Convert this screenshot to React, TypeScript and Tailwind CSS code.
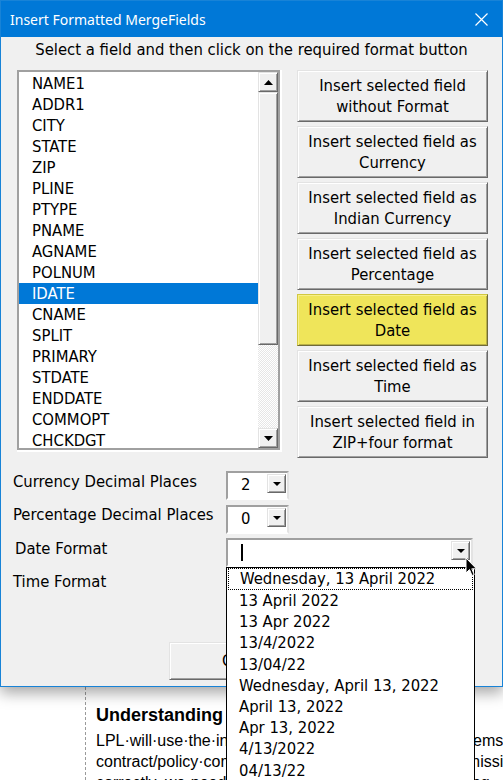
import React from "react";

// Insert Formatted MergeFields — UserForm style dialog over a Word document.

const FIELDS = [
  "NAME1",
  "ADDR1",
  "CITY",
  "STATE",
  "ZIP",
  "PLINE",
  "PTYPE",
  "PNAME",
  "AGNAME",
  "POLNUM",
  "IDATE",
  "CNAME",
  "SPLIT",
  "PRIMARY",
  "STDATE",
  "ENDDATE",
  "COMMOPT",
  "CHCKDGT"
];

const BUTTONS: [string, string][] = [
  ["Insert selected field", "without Format"],
  ["Insert selected field as", "Currency"],
  ["Insert selected field as", "Indian Currency"],
  ["Insert selected field as", "Percentage"],
  ["Insert selected field as", "Date"],
  ["Insert selected field as", "Time"],
  ["Insert selected field in", "ZIP+four format"]
];

const DATE_FORMATS = [
  "Wednesday, 13 April 2022",
  "13 April 2022",
  "13 Apr 2022",
  "13/4/2022",
  "13/04/22",
  "Wednesday, April 13, 2022",
  "April 13, 2022",
  "Apr 13, 2022",
  "4/13/2022",
  "04/13/22",
  "13-Apr-22"
];

const FORM_FONT =
  "font-['DejaVu_Sans_Condensed','DejaVu_Sans',sans-serif] font-stretch-condensed";

// raised 3D look (ButtonFace style)
const RAISED =
  "border-t border-l border-t-[#e3e3e3] border-l-[#e3e3e3] border-r border-b border-r-[#696969] border-b-[#696969] shadow-[inset_1px_1px_#ffffff,inset_-1px_-1px_#a0a0a0]";

function Tri({ up = false, w = 9, h = 5 }: { up?: boolean; w?: number; h?: number }) {
  return (
    <svg width={w} height={h} viewBox={`0 0 ${w} ${h}`}>
      {up ? (
        <path d={`M0 ${h} L${w / 2} 0 L${w} ${h} Z`} fill="#000" />
      ) : (
        <path d={`M0 0 L${w} 0 L${w / 2} ${h} Z`} fill="#000" />
      )}
    </svg>
  );
}

function Combo({ value, width }: { value?: string; width: string }) {
  return (
    <div
      className={`${width} h-[29px] flex border-t-2 border-l-2 border-t-[#a0a0a0] border-l-[#a0a0a0] border-r-2 border-b-2 border-r-[#e3e3e3] border-b-[#ffffff] bg-white`}
    >
      <div className="flex-1 flex items-center pl-[13px] text-[16.5px] leading-none text-black">
        {value !== undefined ? (
          value
        ) : (
          <span className="block w-[2px] h-[17px] bg-black" />
        )}
      </div>
      <div
        className={`w-[19px] h-[19px] mt-[1px] mr-[1px] flex items-center justify-center bg-[#f0f0f0] ${RAISED}`}
      >
        <Tri w={8} h={4} />
      </div>
    </div>
  );
}

function ListBox() {
  return (
    <div className="w-[265px] h-[382px] border-r-2 border-b-2 border-r-white border-b-white">
      <div className="h-full border-2 border-[#a0a0a0] flex">
        <div className="flex-1 bg-white pt-[1px] overflow-hidden">
          {FIELDS.map((f) => (
            <div
              key={f}
              className={`h-[21px] leading-[21px] pl-[13px] text-[16.5px] ${
                f === "IDATE" ? "bg-[#0078d7] text-white" : "text-black"
              }`}
            >
              {f}
            </div>
          ))}
        </div>
        <div className="w-[20px] flex flex-col bg-[#f0f0f0]">
          <div className={`h-[20px] flex items-center justify-center bg-[#f0f0f0] ${RAISED}`}>
            <Tri up />
          </div>
          <div className={`h-[253px] bg-[#f0f0f0] ${RAISED}`} />
          <div className="flex-1 bg-[repeating-conic-gradient(#ffffff_0_25%,#e6e6e6_0_50%)] bg-[length:2px_2px]" />
          <div className={`h-[20px] flex items-center justify-center bg-[#f0f0f0] ${RAISED}`}>
            <Tri />
          </div>
        </div>
      </div>
    </div>
  );
}

function FormatButton({ lines, active }: { lines: [string, string]; active?: boolean }) {
  return (
    <div
      className={`h-[52px] flex flex-col items-center justify-center text-[16.5px] leading-[21px] text-black ${
        active
          ? "bg-[#efe55a] border-t border-l border-t-[#d2c840] border-l-[#d2c840] border-r border-b border-r-[#6f6a3a] border-b-[#6f6a3a] shadow-[inset_1px_1px_#f6ef8a,inset_-1px_-1px_#b9b046]"
          : `bg-[#f0f0f0] ${RAISED}`
      }`}
    >
      <span>{lines[0]}</span>
      <span>{lines[1]}</span>
    </div>
  );
}

function Cursor() {
  return (
    <svg
      width="13"
      height="20"
      viewBox="0 0 13 20"
      className="absolute left-[465px] top-[557px] z-30"
    >
      <path
        d="M1 1 L1 16 L4.5 12.5 L7 18.5 L9.2 17.6 L6.8 11.8 L11.5 11.8 Z"
        fill="#000"
        stroke="#fff"
        strokeWidth="1"
      />
    </svg>
  );
}

export default function App() {
  return (
    <div className="relative w-[503px] h-[780px] overflow-hidden bg-white">
      {/* dialog window */}
      <div className="relative z-10 h-[687px] flex flex-col border border-[#1883d7] bg-[#f0f0f0] shadow-[0_6px_14px_rgba(0,0,0,0.35)]">
        <div className="h-[36px] shrink-0 bg-[#0078d7] flex items-center justify-between pl-[9px] pr-[14px] text-white">
          <span className="font-['Noto_Sans',sans-serif] text-[14px]">
            Insert Formatted MergeFields
          </span>
          <svg width="13" height="13" viewBox="0 0 13 13">
            <path d="M0.5 0.5 L12.5 12.5 M12.5 0.5 L0.5 12.5" stroke="#fff" strokeWidth="1.2" />
          </svg>
        </div>

        <div className={`flex-1 flex flex-col ${FORM_FONT} text-black`}>
          <div className="mt-[2px] h-[22px] leading-[22px] text-center text-[16.5px]">
            Select a field and then click on the required format button
          </div>

          <div className="mt-[9px] flex items-start pl-[16px]">
            <ListBox />
            <div className="ml-[15px] w-[191px] flex flex-col gap-[4px]">
              {BUTTONS.map((b, i) => (
                <FormatButton key={i} lines={b} active={i === 4} />
              ))}
            </div>
          </div>

          {/* options */}
          <div className="mt-[13px] pl-[12px] flex flex-col text-[16.5px]">
            <div className="flex h-[28px]">
              <div className="w-[213px] pt-[1px] leading-[20px]">Currency Decimal Places</div>
              <Combo value="2" width="w-[63px]" />
            </div>
            <div className="flex h-[28px] mt-[6px]">
              <div className="w-[213px] leading-[20px]">Percentage Decimal Places</div>
              <Combo value="0" width="w-[63px]" />
            </div>
            <div className="flex h-[29px] mt-[5px]">
              <div className="w-[213px] pl-[2px] pt-[1px] leading-[20px]">Date Format</div>
              <Combo width="w-[247px]" />
            </div>
            <div className="h-[20px] mt-[5px] leading-[20px]">Time Format</div>
          </div>

          <div className="mt-[50px] pl-[168px]">
            <div className={`w-[163px] h-[38px] flex items-center pl-[52px] bg-[#f0f0f0] text-[16.5px] ${RAISED}`}>
              Cancel
            </div>
          </div>
        </div>
      </div>

      {/* Word document behind the dialog */}
      <div className="h-[93px] pl-[85px] font-['Liberation_Sans',Arial,sans-serif] text-black">
        <div className="h-full border-l border-dashed border-[#9a9a9a] pl-[10px] pt-[17px] whitespace-nowrap">
          <div className="text-[18px] font-bold leading-[22px]">Understanding Your Statement</div>
          <div className="mt-[4px] text-[16px] leading-[21px]">
            LPL·will·use·the·information·you·send·to·update·systems·and
          </div>
          <div className="text-[16px] leading-[21px]">
            contract/policy·compensation·plan·is·applied·to·commission·data
          </div>
          <div className="text-[16px] leading-[21px]">
            correctly,·we·need·the·details·below·so·that·processing
          </div>
        </div>
      </div>

      {/* open date format list */}
      <div className={`absolute left-[226px] top-[567px] z-20 w-[249px] h-[230px] border border-black bg-white ${FORM_FONT} text-[16.5px] text-black`}>
        {DATE_FORMATS.map((d, i) => (
          <div
            key={d}
            className={
              i === 0
                ? "h-[22px] leading-[20px] mx-[1px] border border-dotted border-black pl-[11px]"
                : "h-[21.2px] leading-[21px] pl-[12px]"
            }
          >
            {d}
          </div>
        ))}
      </div>

      <Cursor />
    </div>
  );
}
